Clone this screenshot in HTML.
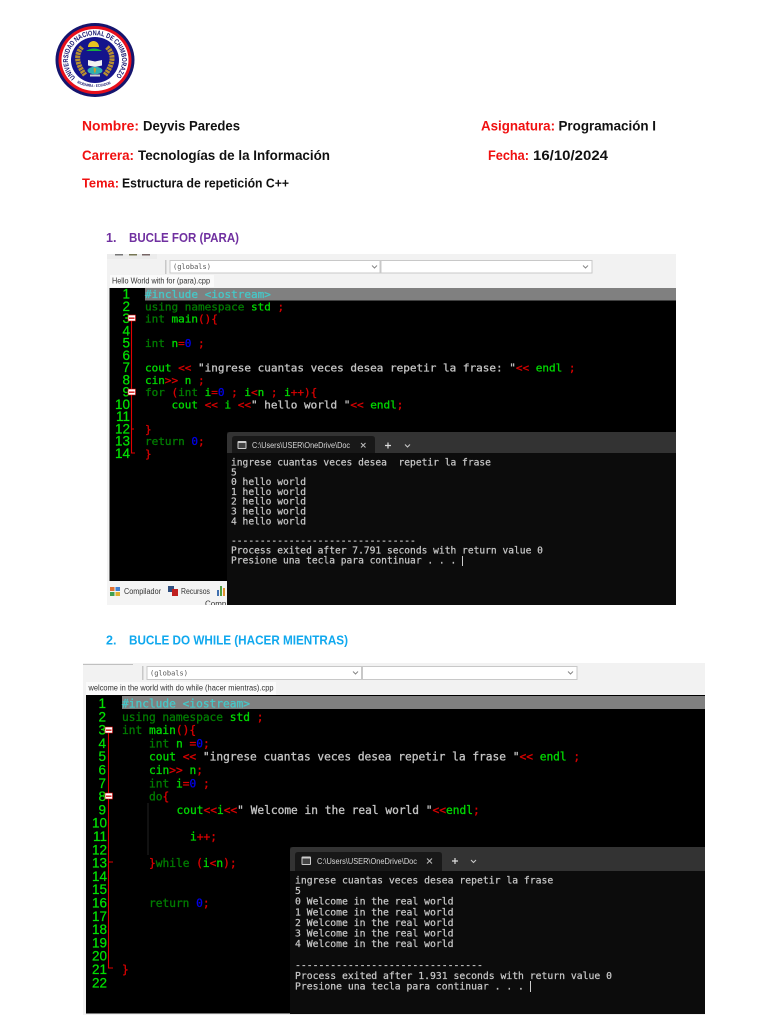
<!DOCTYPE html>
<html lang="es">
<head>
<meta charset="utf-8">
<title>Estructura de repetición C++</title>
<style>
html,body{margin:0;padding:0;background:#fff;width:768px;height:1024px;overflow:hidden}
svg{display:block;position:absolute;left:0;top:0}
text{white-space:pre}
.sans{font-family:"Liberation Sans",sans-serif}
.hd{font-family:"Liberation Sans",sans-serif;font-weight:bold;font-size:13.6px}
.red{fill:#f01010}.blk{fill:#111}
.c1{font-family:"DejaVu Sans Mono",monospace;font-size:11px}
.c2{font-family:"DejaVu Sans Mono",monospace;font-size:11.2px}
.c1 text,.c2 text{stroke-width:.3px;paint-order:stroke}
.t1{font-family:"DejaVu Sans Mono",monospace;font-size:9.6px;fill:#c8c8c8;stroke:#c8c8c8;stroke-width:.22px}
.t2{font-family:"DejaVu Sans Mono",monospace;font-size:9.75px;fill:#c8c8c8;stroke:#c8c8c8;stroke-width:.22px}
.n{font-family:"Liberation Sans",sans-serif;font-size:13.5px;fill:#00e000;stroke:#00e000;stroke-width:.25px;text-anchor:end}
.g{fill:#00d800;stroke:#00d800}.d{fill:#007c00;stroke:#007c00}.r{fill:#d80000;stroke:#d80000}.b{fill:#0000e8;stroke:#0000e8}.s{fill:#c4c4c4;stroke:#c4c4c4}.i{fill:#45c8c8;stroke:#45c8c8}
.ui{font-family:"Liberation Sans",sans-serif;font-size:8px;fill:#333}
.cb{font-family:"DejaVu Sans Mono",monospace;font-size:7px;fill:#555}
.tt{font-family:"Liberation Sans",sans-serif;font-size:8.4px;fill:#d8d8d8}
</style>
</head>
<body>
<svg width="768" height="1024" viewBox="0 0 768 1024" xmlns="http://www.w3.org/2000/svg" style="filter:blur(.35px)">
<rect width="768" height="1024" fill="#fff"/>

<!-- Logo -->
<g>
<ellipse cx="95" cy="60" rx="39.5" ry="37" fill="#15156e"/>
<ellipse cx="95" cy="60" rx="36.5" ry="34" fill="#e8101c"/>
<ellipse cx="95" cy="60" rx="33.5" ry="31" fill="#fff"/>
<ellipse cx="95" cy="60" rx="24" ry="23" fill="#14148c"/>
<defs>
<path id="arcT" d="M75.500 77.500A27 25 0 1 1 114.500 77.500"/>
<path id="arcB" d="M77 83Q95 91 113 83"/>
</defs>
<text class="sans" font-size="7" font-weight="bold" fill="#15156e"><textPath href="#arcT" textLength="118" lengthAdjust="spacingAndGlyphs">UNIVERSIDAD NACIONAL DE CHIMBORAZO</textPath></text>
<text class="sans" font-size="3.800" font-weight="bold" fill="#15156e"><textPath href="#arcB" textLength="35" lengthAdjust="spacingAndGlyphs">RIOBAMBA - ECUADOR</textPath></text>
<path d="M88 47a5.500 6 0 0 1 11 0z" fill="#e8c420"/>
<path d="M86 51q8-5 16 0z" fill="#18b040"/>
<path d="M82 47Q72 58 85 75" fill="none" stroke="#b89030" stroke-width="5" stroke-dasharray="2.500 .7"/>
<path d="M107 47Q118 58 105 75" fill="none" stroke="#b89030" stroke-width="5" stroke-dasharray="2.500 .7"/>
<path d="M88 60l7 1.500l7-1.500v5.500l-7 1.500l-7-1.500z" fill="#f2f2f2"/>
<ellipse cx="95" cy="70.500" rx="7.500" ry="3.800" fill="#30b0b0"/>
<path d="M94 67.500q3 1 2 3l-1 3q-2-3-1-6z" fill="#c8a030"/>
<rect x="90" y="74.500" width="10" height="2" fill="#cfcfcf"/>
</g>

<!-- Header -->
<text x="82" y="130.500" class="hd red" textLength="57" lengthAdjust="spacingAndGlyphs">Nombre:</text>
<text x="143" y="130.500" class="hd blk" textLength="97" lengthAdjust="spacingAndGlyphs">Deyvis Paredes</text>
<text x="481" y="130.500" class="hd red" textLength="74" lengthAdjust="spacingAndGlyphs">Asignatura:</text>
<text x="558.500" y="130.500" class="hd blk" textLength="97.500" lengthAdjust="spacingAndGlyphs">Programación I</text>
<text x="82" y="160" class="hd red" textLength="52" lengthAdjust="spacingAndGlyphs">Carrera:</text>
<text x="138" y="160" class="hd blk" textLength="192" lengthAdjust="spacingAndGlyphs">Tecnologías de la Información</text>
<text x="488" y="160" class="hd red" textLength="41" lengthAdjust="spacingAndGlyphs">Fecha:</text>
<text x="533" y="160" class="hd blk" textLength="75" lengthAdjust="spacingAndGlyphs">16/10/2024</text>
<text x="82" y="187.500" class="hd red" style="font-size:12.500px" textLength="37" lengthAdjust="spacingAndGlyphs">Tema:</text>
<text x="122" y="187.500" class="hd blk" style="font-size:12.500px" textLength="167" lengthAdjust="spacingAndGlyphs">Estructura de repetición C++</text>

<text x="106" y="242" class="hd" fill="#7030a0" style="font-size:12.500px">1.</text>
<text x="129" y="242" class="hd" fill="#7030a0" style="font-size:12.500px" textLength="110" lengthAdjust="spacingAndGlyphs">BUCLE FOR (PARA)</text>
<text x="106" y="644.500" class="hd" fill="#10a8ee" style="font-size:12.500px">2.</text>
<text x="129" y="644.500" class="hd" fill="#10a8ee" style="font-size:12.500px" textLength="219" lengthAdjust="spacingAndGlyphs">BUCLE DO WHILE (HACER MIENTRAS)</text>

<!-- Window 1 -->
<rect x="107" y="254" width="569" height="351" fill="#f2f2f2"/>
<rect x="107" y="254" width="50" height="5" fill="#ececec"/>
<rect x="115" y="254" width="8" height="1.500" fill="#777"/><rect x="129" y="254" width="8" height="1.500" fill="#775"/><rect x="142" y="254" width="8" height="1.500" fill="#766"/>
<rect x="165" y="260" width="1.500" height="14" fill="#c8c8c8"/>
<rect x="170" y="260.500" width="210" height="12.500" fill="#fff" stroke="#c8c8c8"/>
<rect x="381" y="260.500" width="211" height="12.500" fill="#fff" stroke="#c8c8c8"/>
<text x="173" y="269" class="cb">(globals)</text>
<path d="M372 265.500l2.500 2.500l2.500-2.500M583 265.500l2.500 2.500l2.500-2.500" fill="none" stroke="#888"/>
<rect x="110" y="275" width="104" height="12" fill="#fafafa"/>
<text x="112" y="283.500" class="ui" textLength="98" lengthAdjust="spacingAndGlyphs">Hello World with for (para).cpp</text>
<rect x="109.500" y="288" width="566.500" height="293" fill="#000"/>
<rect x="145" y="288" width="531" height="12.500" fill="#808080"/>
<text class="n" x="130" y="298.500">1</text><text class="n" x="130" y="310.800">2</text><text class="n" x="130" y="323">3</text><text class="n" x="130" y="335.300">4</text><text class="n" x="130" y="347.500">5</text><text class="n" x="130" y="359.800">6</text><text class="n" x="130" y="372">7</text><text class="n" x="130" y="384.300">8</text><text class="n" x="130" y="396.500">9</text><text class="n" x="130" y="408.800">10</text><text class="n" x="130" y="421">11</text><text class="n" x="130" y="433.300">12</text><text class="n" x="130" y="445.500">13</text><text class="n" x="130" y="457.800">14</text>
<path d="M131.500 321V453H135M131.500 429H134" fill="none" stroke="#e00000" stroke-width="1.100"/>
<rect x="128" y="315" width="7.500" height="6" fill="#fff" stroke="#d00000" stroke-width=".6"/><rect x="129" y="317.500" width="5.500" height="1.300" fill="#d00000"/>
<rect x="128" y="389" width="7.500" height="6" fill="#fff" stroke="#d00000" stroke-width=".6"/><rect x="129" y="391.500" width="5.500" height="1.300" fill="#d00000"/>
<g class="c1">
<text x="145" y="298" class="i">#include &lt;iostream&gt;</text>
<text x="145" y="310.300"><tspan class="d">using namespace </tspan><tspan class="g">std</tspan><tspan class="r"> ;</tspan></text>
<text x="145" y="322.500"><tspan class="d">int </tspan><tspan class="g">main</tspan><tspan class="r">(){</tspan></text>
<text x="145" y="347"><tspan class="d">int </tspan><tspan class="g">n</tspan><tspan class="r">=</tspan><tspan class="b">0</tspan><tspan class="r"> ;</tspan></text>
<text x="145" y="371.500"><tspan class="g">cout </tspan><tspan class="r">&lt;&lt; </tspan><tspan class="s">"ingrese cuantas veces desea repetir la frase: "</tspan><tspan class="r">&lt;&lt; </tspan><tspan class="g">endl </tspan><tspan class="r">;</tspan></text>
<text x="145" y="383.800"><tspan class="g">cin</tspan><tspan class="r">&gt;&gt; </tspan><tspan class="g">n </tspan><tspan class="r">;</tspan></text>
<text x="145" y="396"><tspan class="d">for </tspan><tspan class="r">(</tspan><tspan class="d">int </tspan><tspan class="g">i</tspan><tspan class="r">=</tspan><tspan class="b">0 </tspan><tspan class="r">; </tspan><tspan class="g">i</tspan><tspan class="r">&lt;</tspan><tspan class="g">n </tspan><tspan class="r">; </tspan><tspan class="g">i</tspan><tspan class="r">++){</tspan></text>
<text x="171.500" y="408.300"><tspan class="g">cout </tspan><tspan class="r">&lt;&lt; </tspan><tspan class="g">i </tspan><tspan class="r">&lt;&lt;</tspan><tspan class="s">" hello world "</tspan><tspan class="r">&lt;&lt; </tspan><tspan class="g">endl</tspan><tspan class="r">;</tspan></text>
<text x="145" y="432.800" class="r">}</text>
<text x="145" y="445"><tspan class="d">return </tspan><tspan class="b">0</tspan><tspan class="r">;</tspan></text>
<text x="145" y="457.300" class="r">}</text>
</g>
<!-- bottom tabs 1 -->
<rect x="107" y="581" width="120" height="24" fill="#f4f4f4"/>
<rect x="110" y="587" width="4.500" height="4" fill="#e07030"/><rect x="115.500" y="587" width="4.500" height="4" fill="#4080d0"/><rect x="110" y="592" width="4.500" height="4" fill="#40a050"/><rect x="115.500" y="592" width="4.500" height="4" fill="#e0b030"/>
<text x="124" y="594" class="ui" textLength="37" lengthAdjust="spacingAndGlyphs">Compilador</text>
<rect x="168" y="586" width="6" height="6" fill="#305080"/><rect x="172" y="589" width="6" height="7" fill="#c02020"/>
<text x="181" y="594" class="ui" textLength="29" lengthAdjust="spacingAndGlyphs">Recursos</text>
<rect x="217" y="590" width="2" height="6" fill="#4070b0"/><rect x="220" y="586" width="2" height="10" fill="#50a040"/><rect x="223" y="588" width="2" height="8" fill="#e09030"/>
<text x="205" y="606.500" class="ui">Comp</text>
<rect x="107" y="605" width="130" height="3" fill="#fff"/>
<!-- Terminal 1 -->
<rect x="227" y="432" width="449" height="173" fill="#0c0c0c"/>
<path d="M227 453v-18q0-3 3-3h446v21z" fill="#333"/>
<path d="M232 453v-14q0-3 3-3h137q3 0 3 3v14z" fill="#181818"/>
<rect x="237.500" y="441" width="9" height="8" rx="1" fill="#ccc"/><rect x="238.500" y="443" width="7" height="5" fill="#444"/>
<text x="252" y="448" class="tt" textLength="98" lengthAdjust="spacingAndGlyphs">C:\Users\USER\OneDrive\Doc</text>
<path d="M361 443l4.500 4.500m0-4.500l-4.500 4.500" stroke="#bbb" fill="none"/>
<path d="M385 445.500h6m-3-3v6" stroke="#ddd" stroke-width="1.200" fill="none"/>
<path d="M405 444.500l2.500 2.500l2.500-2.500" stroke="#ccc" fill="none"/>
<text class="t1" x="231" y="465.500">ingrese cuantas veces desea  repetir la frase</text>
<text class="t1" x="231" y="475.300">5</text>
<text class="t1" x="231" y="485.100">0 hello world</text>
<text class="t1" x="231" y="494.900">1 hello world</text>
<text class="t1" x="231" y="504.700">2 hello world</text>
<text class="t1" x="231" y="514.500">3 hello world</text>
<text class="t1" x="231" y="524.300">4 hello world</text>
<text class="t1" x="231" y="543.900">--------------------------------</text>
<text class="t1" x="231" y="553.700">Process exited after 7.791 seconds with return value 0</text>
<text class="t1" x="231" y="563.500">Presione una tecla para continuar . . . </text>
<rect x="462" y="556" width="1" height="10" fill="#ccc"/>

<!-- Window 2 -->
<rect x="83" y="663" width="622" height="352" fill="#f2f2f2"/>
<rect x="83" y="664" width="50" height="1" fill="#c0c0c0"/>
<rect x="142" y="666" width="1.500" height="14" fill="#c8c8c8"/>
<rect x="147" y="666.500" width="214.500" height="13" fill="#fff" stroke="#c8c8c8"/>
<rect x="362.500" y="666.500" width="214.500" height="13" fill="#fff" stroke="#c8c8c8"/>
<text x="150" y="675.500" class="cb">(globals)</text>
<path d="M353 671.500l2.500 2.500l2.500-2.500M568 671.500l2.500 2.500l2.500-2.500" fill="none" stroke="#888"/>
<rect x="86" y="682" width="190" height="13" fill="#fafafa"/>
<text x="88.500" y="690.500" class="ui" textLength="185" lengthAdjust="spacingAndGlyphs">welcome in the world with do while (hacer mientras).cpp</text>
<rect x="86" y="695" width="619" height="318.500" fill="#000"/>
<rect x="122" y="696" width="583" height="13" fill="#808080"/>
<text class="n" x="106" y="708">1</text><text class="n" x="106" y="721.300">2</text><text class="n" x="106" y="734.600">3</text><text class="n" x="106" y="747.900">4</text><text class="n" x="106" y="761.200">5</text><text class="n" x="106" y="774.500">6</text><text class="n" x="106" y="787.800">7</text><text class="n" x="106" y="801.100">8</text><text class="n" x="106" y="814.400">9</text><text class="n" x="107" y="827.700">10</text><text class="n" x="107" y="841">11</text><text class="n" x="107" y="854.300">12</text><text class="n" x="107" y="867.600">13</text><text class="n" x="107" y="880.900">14</text><text class="n" x="107" y="894.200">15</text><text class="n" x="107" y="907.500">16</text><text class="n" x="107" y="920.800">17</text><text class="n" x="107" y="934.100">18</text><text class="n" x="107" y="947.400">19</text><text class="n" x="107" y="960.700">20</text><text class="n" x="107" y="974">21</text><text class="n" x="107" y="987.300">22</text>
<path d="M108.500 733V968H113M108.500 862H113" fill="none" stroke="#e00000" stroke-width="1.100"/>
<rect x="105" y="727" width="7.500" height="6" fill="#fff" stroke="#d00000" stroke-width=".6"/><rect x="106" y="729.500" width="5.500" height="1.300" fill="#d00000"/>
<rect x="105" y="793" width="7.500" height="6" fill="#fff" stroke="#d00000" stroke-width=".6"/><rect x="106" y="795.500" width="5.500" height="1.300" fill="#d00000"/>
<path d="M148 803V855" stroke="#222" fill="none"/>
<g class="c2">
<text x="122" y="707.500" class="i">#include &lt;iostream&gt;</text>
<text x="122" y="720.800"><tspan class="d">using namespace </tspan><tspan class="g">std</tspan><tspan class="r"> ;</tspan></text>
<text x="122" y="734.100"><tspan class="d">int </tspan><tspan class="g">main</tspan><tspan class="r">(){</tspan></text>
<text x="149" y="747.400"><tspan class="d">int </tspan><tspan class="g">n </tspan><tspan class="r">=</tspan><tspan class="b">0</tspan><tspan class="r">;</tspan></text>
<text x="149" y="760.700"><tspan class="g">cout </tspan><tspan class="r">&lt;&lt; </tspan><tspan class="s">"ingrese cuantas veces desea repetir la frase "</tspan><tspan class="r">&lt;&lt; </tspan><tspan class="g">endl </tspan><tspan class="r">;</tspan></text>
<text x="149" y="774"><tspan class="g">cin</tspan><tspan class="r">&gt;&gt; </tspan><tspan class="g">n</tspan><tspan class="r">;</tspan></text>
<text x="149" y="787.300"><tspan class="d">int </tspan><tspan class="g">i</tspan><tspan class="r">=</tspan><tspan class="b">0 </tspan><tspan class="r">;</tspan></text>
<text x="149" y="800.600"><tspan class="d">do</tspan><tspan class="r">{</tspan></text>
<text x="176.500" y="813.900"><tspan class="g">cout</tspan><tspan class="r">&lt;&lt;</tspan><tspan class="g">i</tspan><tspan class="r">&lt;&lt;</tspan><tspan class="s">" Welcome in the real world "</tspan><tspan class="r">&lt;&lt;</tspan><tspan class="g">endl</tspan><tspan class="r">;</tspan></text>
<text x="190" y="840.500"><tspan class="g">i</tspan><tspan class="r">++;</tspan></text>
<text x="149" y="867.100"><tspan class="r">}</tspan><tspan class="d">while </tspan><tspan class="r">(</tspan><tspan class="g">i</tspan><tspan class="r">&lt;</tspan><tspan class="g">n</tspan><tspan class="r">);</tspan></text>
<text x="149" y="907"><tspan class="d">return </tspan><tspan class="b">0</tspan><tspan class="r">;</tspan></text>
<text x="122" y="973.500" class="r">}</text>
</g>
<!-- Terminal 2 -->
<rect x="290" y="847" width="415" height="167" fill="#0c0c0c"/>
<path d="M290 871v-21q0-3 3-3h412v24z" fill="#333"/>
<path d="M295 871v-16q0-3 3-3h141q3 0 3 3v16z" fill="#181818"/>
<rect x="301.500" y="856.500" width="9.500" height="8.500" rx="1" fill="#ccc"/><rect x="302.500" y="858.500" width="7.500" height="5.500" fill="#444"/>
<text x="317" y="864" class="tt" textLength="100" lengthAdjust="spacingAndGlyphs">C:\Users\USER\OneDrive\Doc</text>
<path d="M427 858.500l5 5m0-5l-5 5" stroke="#bbb" fill="none"/>
<path d="M452 861h6m-3-3v6" stroke="#ddd" stroke-width="1.200" fill="none"/>
<path d="M471 860l2.500 2.500l2.500-2.500" stroke="#ccc" fill="none"/>
<text class="t2" x="295" y="883.500">ingrese cuantas veces desea repetir la frase</text>
<text class="t2" x="295" y="894.100">5</text>
<text class="t2" x="295" y="904.700">0 Welcome in the real world</text>
<text class="t2" x="295" y="915.300">1 Welcome in the real world</text>
<text class="t2" x="295" y="925.900">2 Welcome in the real world</text>
<text class="t2" x="295" y="936.500">3 Welcome in the real world</text>
<text class="t2" x="295" y="947.100">4 Welcome in the real world</text>
<text class="t2" x="295" y="968.300">--------------------------------</text>
<text class="t2" x="295" y="978.900">Process exited after 1.931 seconds with return value 0</text>
<text class="t2" x="295" y="989.500">Presione una tecla para continuar . . . </text>
<rect x="530" y="981" width="1" height="11" fill="#ccc"/>
</svg>
</body>
</html>
